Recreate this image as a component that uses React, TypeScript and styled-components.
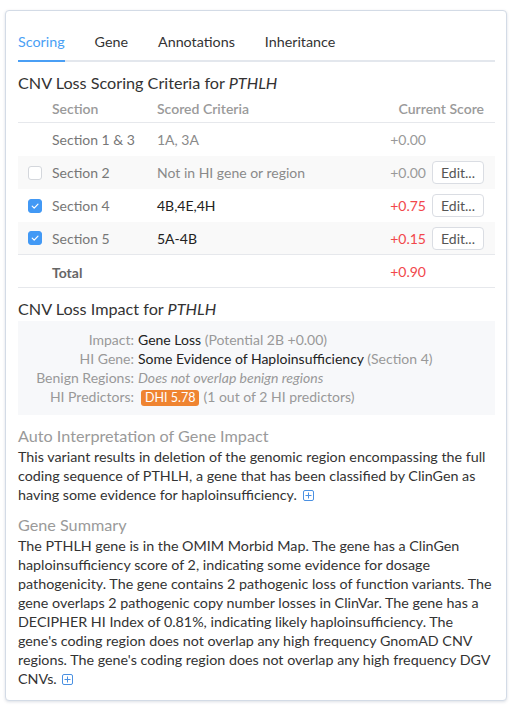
import React from "react";
import styled, { createGlobalStyle } from "styled-components";

const Global = createGlobalStyle`
  html, body { margin: 0; padding: 0; background: #ffffff; }
  body { font-family: Lato, "Noto Sans", sans-serif; font-size: 14px; color: #333; }
  * { box-sizing: border-box; }
`;

const Page = styled.div`
  padding: 10px 11px 8px 5px;
`;

const Card = styled.div`
  border: 1px solid #d3dbe6;
  border-radius: 4px;
  box-shadow: 0 1px 3px rgba(60, 80, 110, 0.18);
  padding: 12px 11px 12px 12px;
  background: #fff;
`;

const Tabs = styled.div`
  display: flex;
  gap: 30px;
  border-bottom: 2px solid #e3e7ed;
`;

const Tab = styled.div<{ $active?: boolean }>`
  padding: 9px 0 8px;
  line-height: 20px;
  font-size: 14.3px;
  color: ${(p) => (p.$active ? "#4a9ff5" : "#333")};
  border-bottom: 2px solid ${(p) => (p.$active ? "#4a9ff5" : "transparent")};
  margin-bottom: -2px;
`;

const Heading = styled.div<{ $muted?: boolean; $mt?: number }>`
  font-size: 16.2px;
  line-height: 22px;
  color: ${(p) => (p.$muted ? "#9a9a9a" : "#333")};
  margin-top: ${(p) => p.$mt ?? 0}px;
`;

const Table = styled.div`
  display: flex;
  flex-direction: column;
`;

const Row = styled.div<{ $striped?: boolean; $head?: boolean; $border?: boolean }>`
  display: grid;
  grid-template-columns: 34px 105px 1fr auto 69px;
  align-items: center;
  height: ${(p) => (p.$head ? "29px" : "33px")};
  background: ${(p) => (p.$striped ? "#f9f9f9" : "transparent")};
  border-bottom: ${(p) => (p.$border ? "1px solid #e6e8ec" : "none")};
  font-size: 14px;
  color: ${(p) => (p.$head ? "#9a9a9a" : "#777")};
  font-weight: ${(p) => (p.$head ? 600 : 400)};
`;

const HeadScore = styled.div`
  grid-column: 4 / span 2;
  text-align: right;
  padding-right: 11px;
`;

const CheckCell = styled.div`
  padding-left: 10px;
  display: flex;
  align-items: center;
`;

const Box = styled.span<{ $checked?: boolean }>`
  width: 14px;
  height: 14px;
  border-radius: 3px;
  background: ${(p) => (p.$checked ? "#4299f5" : "#fff")};
  border: 1px solid ${(p) => (p.$checked ? "#4299f5" : "#d4d7dc")};
  display: inline-flex;
  align-items: center;
  justify-content: center;
`;

const Criteria = styled.div<{ $dark?: boolean }>`
  color: ${(p) => (p.$dark ? "#222" : "#8a8a8a")};
`;

const Score = styled.div<{ $red?: boolean }>`
  text-align: right;
  color: ${(p) => (p.$red ? "#f2474b" : "#999")};
`;

const Total = styled.div`
  font-weight: 700;
  color: #666;
  padding-top: 2px;
`;

const EditCell = styled.div`
  padding-left: 6px;
`;

const EditButton = styled.button`
  width: 52px;
  height: 23px;
  border: 1px solid #dadde3;
  border-radius: 4px;
  background: #fff;
  color: #555;
  font-family: inherit;
  font-size: 14px;
  padding: 0;
  cursor: pointer;
`;

const ImpactBox = styled.div`
  background: #f7f8fa;
  margin-top: 1px;
  padding: 9px 0;
  display: grid;
  grid-template-columns: 116px 1fr;
  column-gap: 4px;
  line-height: 19px;
  font-size: 14px;
`;

const Label = styled.div`
  text-align: right;
  color: #999;
`;

const Value = styled.div`
  color: #222;
`;

const Muted = styled.span<{ $italic?: boolean }>`
  color: #999;
  font-style: ${(p) => (p.$italic ? "italic" : "normal")};
`;

const Badge = styled.span`
  display: inline-block;
  background: #ef8431;
  color: #fff;
  border-radius: 3px;
  padding: 0 4px;
  margin-left: 3px;
  margin-right: 4px;
  line-height: 16px;
  font-size: 12.5px;
`;

const Paragraph = styled.p`
  margin: 0;
  line-height: 19px;
  font-size: 14.3px;
  color: #333;
`;

const ExpandIcon = () => (
  <svg width="11" height="11" viewBox="0 0 11 11" style={{ verticalAlign: "-1px", marginLeft: 2 }}>
    <rect x="0.5" y="0.5" width="10" height="10" rx="1.5" fill="none" stroke="#4a90e2" />
    <path d="M5.5 2.5v6M2.5 5.5h6" stroke="#4a90e2" strokeWidth="1" />
  </svg>
);

const Check = () => (
  <svg width="10" height="10" viewBox="0 0 10 10">
    <path d="M2.2 5.2l2 2 3.8-4" fill="none" stroke="#fff" strokeWidth="1.2" strokeLinecap="round" strokeLinejoin="round" />
  </svg>
);

type R = { checkbox?: boolean; checked?: boolean; section: string; criteria: string; dark?: boolean; score: string; red?: boolean; edit?: boolean };

const rows: R[] = [
  { section: "Section 1 & 3", criteria: "1A, 3A", score: "+0.00" },
  { checkbox: true, section: "Section 2", criteria: "Not in HI gene or region", score: "+0.00", edit: true },
  { checkbox: true, checked: true, section: "Section 4", criteria: "4B,4E,4H", dark: true, score: "+0.75", red: true, edit: true },
  { checkbox: true, checked: true, section: "Section 5", criteria: "5A-4B", dark: true, score: "+0.15", red: true, edit: true },
];

export default function App() {
  return (
    <Page>
      <Global />
      <Card>
        <Tabs>
          <Tab $active>Scoring</Tab>
          <Tab>Gene</Tab>
          <Tab>Annotations</Tab>
          <Tab>Inheritance</Tab>
        </Tabs>
        <Heading $mt={10}>
          CNV Loss Scoring Criteria for <i>PTHLH</i>
        </Heading>
        <Table>
          <Row $head $border>
            <div />
            <div>Section</div>
            <div>Scored Criteria</div>
            <HeadScore>Current Score</HeadScore>
          </Row>
          {rows.map((r, i) => (
            <Row key={r.section} $striped={i % 2 === 1} $border={i === rows.length - 1}>
              <CheckCell>
                {r.checkbox && <Box $checked={r.checked}>{r.checked && <Check />}</Box>}
              </CheckCell>
              <div>{r.section}</div>
              <Criteria $dark={r.dark}>{r.criteria}</Criteria>
              <Score $red={r.red}>{r.score}</Score>
              <EditCell>{r.edit && <EditButton>Edit...</EditButton>}</EditCell>
            </Row>
          ))}
          <Row $border>
            <div />
            <Total>Total</Total>
            <div />
            <Score $red>+0.90</Score>
            <div />
          </Row>
        </Table>
        <Heading $mt={10}>
          CNV Loss Impact for <i>PTHLH</i>
        </Heading>
        <ImpactBox>
          <Label>Impact:</Label>
          <Value>
            Gene Loss <Muted>(Potential 2B +0.00)</Muted>
          </Value>
          <Label>HI Gene:</Label>
          <Value>
            Some Evidence of Haploinsufficiency <Muted>(Section 4)</Muted>
          </Value>
          <Label>Benign Regions:</Label>
          <Value>
            <Muted $italic>Does not overlap benign regions</Muted>
          </Value>
          <Label>HI Predictors:</Label>
          <Value>
            <Badge>DHI 5.78</Badge>
            <Muted>(1 out of 2 HI predictors)</Muted>
          </Value>
        </ImpactBox>
        <Heading $muted $mt={10}>Auto Interpretation of Gene Impact</Heading>
        <Paragraph>
          This variant results in deletion of the genomic region encompassing the full coding sequence of PTHLH, a gene
          that has been classified by ClinGen as having some evidence for haploinsufficiency. <ExpandIcon />
        </Paragraph>
        <Heading $muted $mt={10}>Gene Summary</Heading>
        <Paragraph>
          The PTHLH gene is in the OMIM Morbid Map. The gene has a ClinGen haploinsufficiency score of 2, indicating some
          evidence for dosage pathogenicity. The gene contains 2 pathogenic loss of function variants. The gene overlaps 2
          pathogenic copy number losses in ClinVar. The gene has a DECIPHER HI Index of 0.81%, indicating likely
          haploinsufficiency. The gene's coding region does not overlap any high frequency GnomAD CNV regions. The gene's
          coding region does not overlap any high frequency DGV CNVs. <ExpandIcon />
        </Paragraph>
      </Card>
    </Page>
  );
}
